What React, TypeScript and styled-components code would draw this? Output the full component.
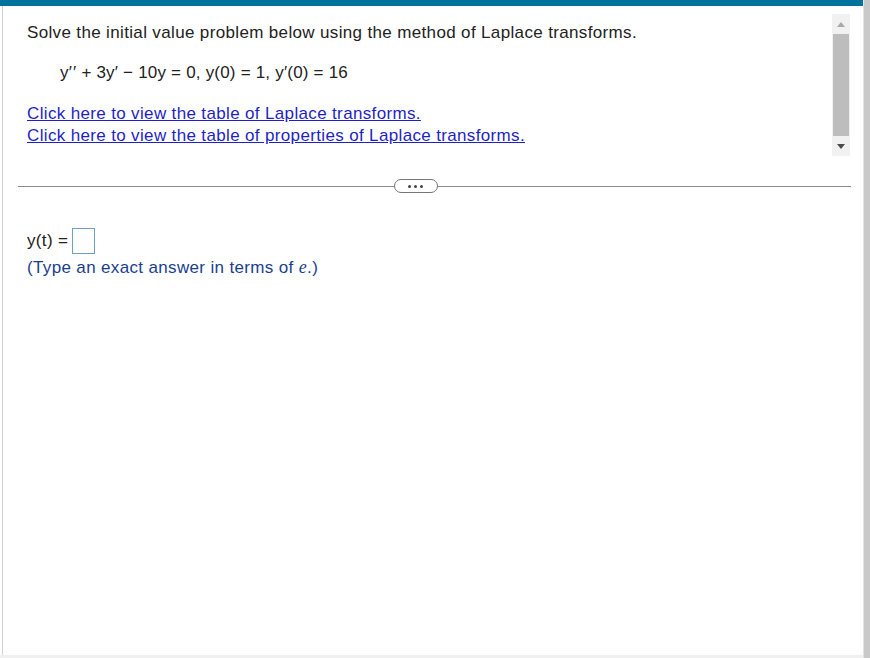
import React from 'react';
import styled, { createGlobalStyle } from 'styled-components';

const GlobalStyle = createGlobalStyle`
  html, body {
    margin: 0;
    padding: 0;
    background: #f0f0f0;
  }
  body {
    font-family: "Liberation Sans", Arial, sans-serif;
    color: #222;
  }
`;

const Page = styled.div`
  display: flex;
  width: 870px;
  height: 658px;
  overflow: hidden;
`;

const Frame = styled.div`
  width: 863px;
  height: 655px;
  display: flex;
  flex-direction: column;
  background: #fff;
`;

const RightEdge = styled.div`
  width: 7px;
  height: 658px;
  background: #c9c9c9;
  border-left: 1px solid #e4e4e4;
  box-sizing: border-box;
`;

const TopBar = styled.div`
  height: 6px;
  background: #00739d;
  flex-shrink: 0;
`;

const Body = styled.div`
  flex: 1;
  border-left: 1px solid #d2d2d2;
  margin-left: 2px;
  display: flex;
  flex-direction: column;
`;

const QuestionRow = styled.div`
  display: flex;
  height: 173px;
`;

const Question = styled.div`
  flex: 1;
  padding: 17px 0 0 24px;
  font-size: 17px;
  line-height: 20px;
  letter-spacing: 0.35px;
`;

const Prompt = styled.div`
  margin: 0;
`;

const Equation = styled.div`
  margin: 20px 0 0 33px;
  letter-spacing: 0.2px;
`;

const Prime = styled.span`
  margin-left: 1px;
`;

const Links = styled.div`
  margin-top: 20px;
  display: flex;
  flex-direction: column;
`;

const LinkText = styled.a`
  color: #1f1fc8;
  text-decoration: underline;
  line-height: 22px;
  cursor: pointer;
  align-self: flex-start;
`;

const Scrollbar = styled.div`
  width: 18px;
  margin: 8px 13px 0 0;
  height: 142px;
  background: #f1f1f1;
  display: flex;
  flex-direction: column;
  align-items: center;
`;

const Arrow = styled.div<{ $down?: boolean }>`
  height: 20px;
  display: flex;
  align-items: center;
  justify-content: center;
  &::after {
    content: '';
    width: 0;
    height: 0;
    border-left: 4px solid transparent;
    border-right: 4px solid transparent;
    ${p =>
      p.$down
        ? 'border-top: 5px solid #4a4a4a;'
        : 'border-bottom: 5px solid #a8a8a8;'}
  }
`;

const Thumb = styled.div`
  width: 16px;
  flex: 1;
  background: #bdbdbd;
`;

const Divider = styled.div`
  position: relative;
  margin: 0 12px 0 15px;
  height: 14px;
  display: flex;
  align-items: center;
  justify-content: center;
  &::before {
    content: '';
    position: absolute;
    left: 0;
    right: 0;
    top: 7px;
    height: 1px;
    background: #8a8a8a;
  }
`;

const MoreButton = styled.button`
  position: relative;
  width: 44px;
  height: 14px;
  margin-left: -38px;
  border: 1px solid #777;
  border-radius: 7px;
  background: #fff;
  padding: 0;
  display: flex;
  align-items: center;
  justify-content: center;
  gap: 3px;
`;

const Dot = styled.span`
  width: 3px;
  height: 3px;
  border-radius: 50%;
  background: #444;
`;

const Answer = styled.div`
  padding: 35px 0 0 24px;
  font-size: 17px;
  line-height: 20px;
  letter-spacing: 0.35px;
`;

const AnswerLine = styled.div`
  display: flex;
  align-items: center;
  gap: 4px;
`;

const AnswerBox = styled.div`
  width: 21px;
  height: 24px;
  border: 1px solid #6a9fd4;
  background: #fff;
`;

const Hint = styled.div`
  margin-top: 3px;
  color: #1a3f8f;
`;

const MathE = styled.i`
  font-family: "Liberation Serif", "Times New Roman", serif;
  font-size: 18px;
`;

const App: React.FC = () => (
  <>
    <GlobalStyle />
    <Page>
      <Frame>
        <TopBar />
        <Body>
          <QuestionRow>
            <Question>
              <Prompt>Solve the initial value problem below using the method of Laplace transforms.</Prompt>
              <Equation>
                y′<Prime>′</Prime> + 3y′ − 10y = 0, y(0) = 1, y′(0) = 16
              </Equation>
              <Links>
                <LinkText>Click here to view the table of Laplace transforms.</LinkText>
                <LinkText>Click here to view the table of properties of Laplace transforms.</LinkText>
              </Links>
            </Question>
            <Scrollbar>
              <Arrow />
              <Thumb />
              <Arrow $down />
            </Scrollbar>
          </QuestionRow>
          <Divider>
            <MoreButton aria-label="more">
              <Dot />
              <Dot />
              <Dot />
            </MoreButton>
          </Divider>
          <Answer>
            <AnswerLine>
              <span>y(t) =</span>
              <AnswerBox />
            </AnswerLine>
            <Hint>
              (Type an exact answer in terms of <MathE>e</MathE>.)
            </Hint>
          </Answer>
        </Body>
      </Frame>
      <RightEdge />
    </Page>
  </>
);

export default App;
